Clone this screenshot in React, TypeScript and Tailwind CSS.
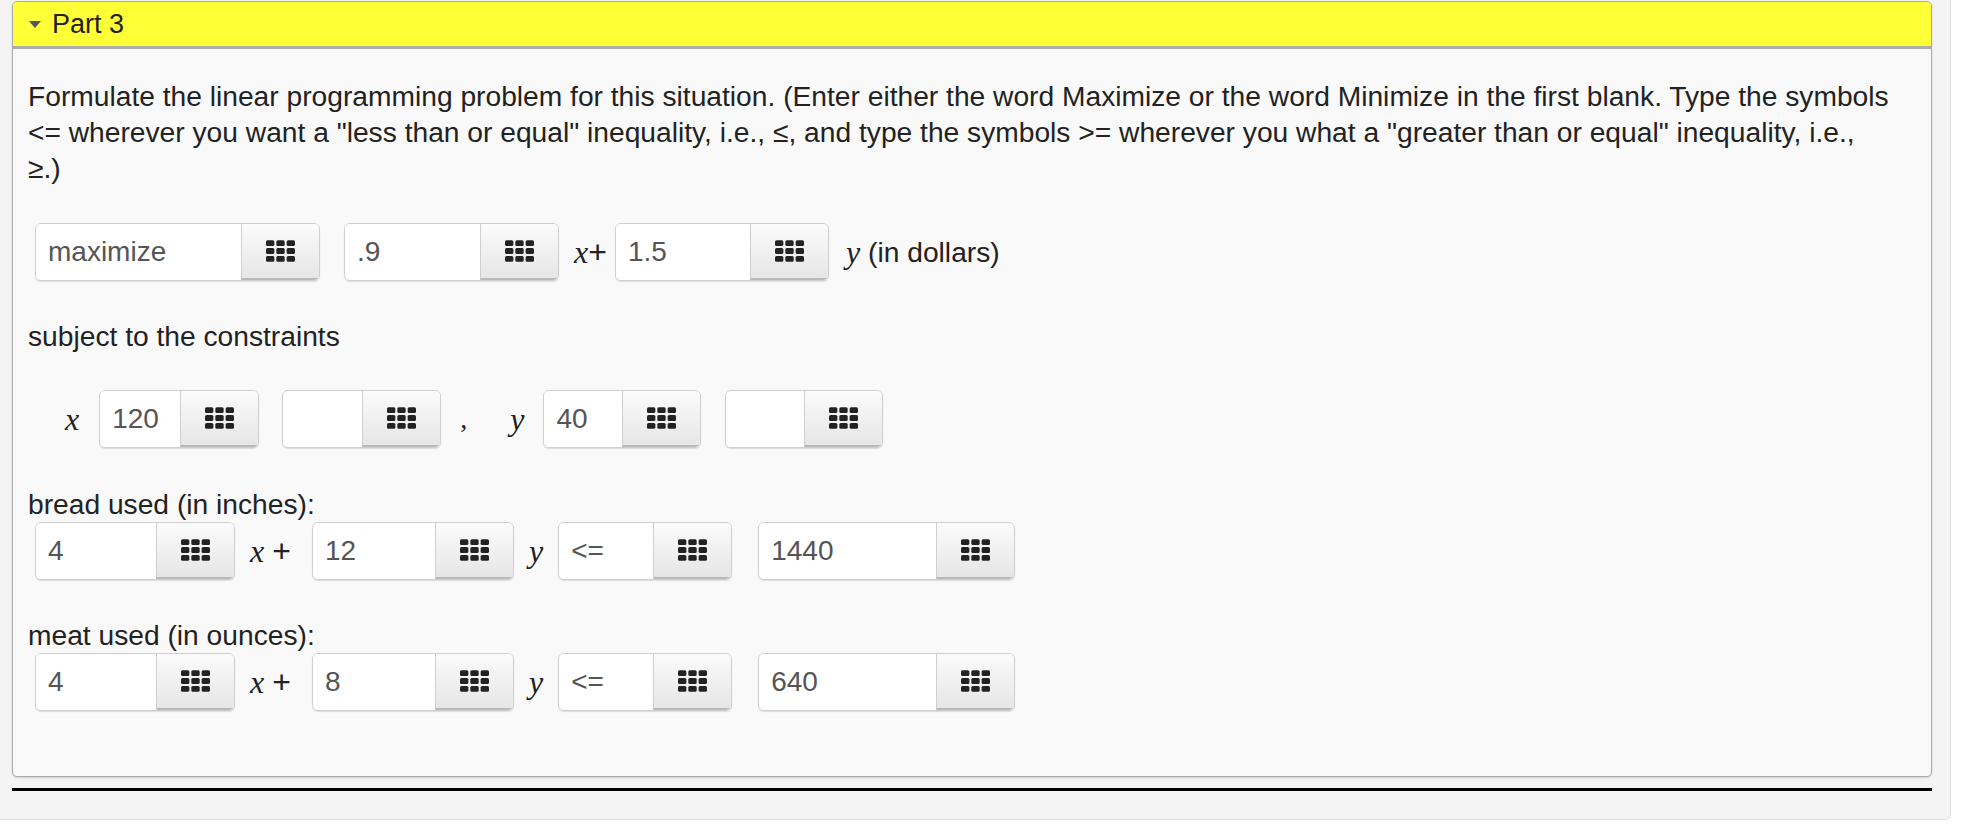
import type { ReactNode } from "react";

const SANS = "font-['Liberation_Sans',Arial,Helvetica,sans-serif]";

function GridIcon(): ReactNode {
	const cols = [0, 10.5, 21];
	const rows = [0, 8, 16];
	return (
		<svg width="29" height="22" viewBox="0 0 29.5 22" className="flex-none">
			{rows.map((y) =>
				cols.map((x) => (
					<rect key={`${x}-${y}`} x={x} y={y} width="8.5" height="6" rx="1.6" fill="#222" />
				))
			)}
		</svg>
	);
}

function Field({ value, w }: { value: string; w: string }): ReactNode {
	return (
		<div className="flex h-[58px] flex-none rounded-[6px] border border-[#cfcfcf] shadow-[0_1px_1px_rgba(0,0,0,0.12)] overflow-hidden">
			<div className={`${w} flex items-center bg-white pl-[12px] text-[28px] text-[#555]`}>{value}</div>
			<div className="w-[78px] flex items-center justify-center border-l border-[#cfcfcf] bg-gradient-to-b from-[#fbfbfb] to-[#e6e6e6] border-b-2 border-b-[#b9b9b9]">
				<GridIcon />
			</div>
		</div>
	);
}

function V({ children, className = "" }: { children: ReactNode; className?: string }): ReactNode {
	return (
		<span className={`font-['Liberation_Serif','Times_New_Roman',serif] italic text-[32px] leading-none text-[#222] ${className}`}>
			{children}
		</span>
	);
}

export default function App(): ReactNode {
	return (
		<div className={`min-h-screen bg-white ${SANS}`}>
			<div className="w-[1951px] h-[820px] bg-[#f4f4f4] border-r border-b border-[#e2e2e2] rounded-br-[6px] pt-px">
				<div className="ml-[12px] w-[1920px] rounded-[5px] border border-[#aaa] bg-[#f9f9f9] shadow-[0_1px_2px_rgba(0,0,0,0.15)] overflow-hidden">
					<div className="h-[47px] bg-[#ffff38] border-b-[3px] border-[#adadad] flex items-center pl-[16px]">
						<svg width="12" height="8" viewBox="0 0 12 8" className="mr-[11px] mt-[1px]">
							<polygon points="0,0 12,0 6,7" fill="#555" />
						</svg>
						<span className="text-[27px] text-[#222] leading-none">Part 3</span>
					</div>

					<div className="pl-[15px] pr-[20px] pt-[29px] pb-[65px] text-[28.2px] leading-[36px] text-[#222]">
						<p>
							Formulate the linear programming problem for this situation. (Enter either the word Maximize or the word
							Minimize in the first blank. Type the symbols &lt;= wherever you want a "less than or equal" inequality,
							i.e., ≤, and type the symbols &gt;= wherever you what a "greater than or equal" inequality, i.e.,
							<br />
							≥.)
						</p>

						<div className="flex items-center mt-[37px] ml-[7px]">
							<Field value="maximize" w="w-[205px]" />
							<div className="w-[24px]" />
							<Field value=".9" w="w-[135px]" />
							<V className="ml-[15px] mr-[8px]">
								x<span className={`not-italic ${SANS}`}>+</span>
							</V>
							<Field value="1.5" w="w-[134px]" />
							<V className="ml-[17px] mr-[8px]">y</V>
							<span>(in dollars)</span>
						</div>

						<p className="mt-[37px]">subject to the constraints</p>

						<div className="flex items-center mt-[36px]">
							<V className="ml-[37px] mr-[20px]">x</V>
							<Field value="120" w="w-[80px]" />
							<div className="w-[23px]" />
							<Field value="" w="w-[79px]" />
							<span className="ml-[19px] mr-[43px] font-['Liberation_Serif',serif] text-[28px]">,</span>
							<V className="mr-[19px]">y</V>
							<Field value="40" w="w-[78px]" />
							<div className="w-[24px]" />
							<Field value="" w="w-[78px]" />
						</div>

						<p className="mt-[38px]">bread used (in inches):</p>
						<div className="flex items-center ml-[7px]">
							<Field value="4" w="w-[120px]" />
							<V className="ml-[15px] w-[49px]">
								x <span className={`not-italic ${SANS}`}>+</span>
							</V>
							<div className="w-[13px]" />
							<Field value="12" w="w-[122px]" />
							<V className="ml-[15px] mr-[15px]">y</V>
							<Field value="<=" w="w-[94px]" />
							<div className="w-[26px]" />
							<Field value="1440" w="w-[177px]" />
						</div>

						<p className="mt-[37px]">meat used (in ounces):</p>
						<div className="flex items-center ml-[7px]">
							<Field value="4" w="w-[120px]" />
							<V className="ml-[15px] w-[49px]">
								x <span className={`not-italic ${SANS}`}>+</span>
							</V>
							<div className="w-[13px]" />
							<Field value="8" w="w-[122px]" />
							<V className="ml-[15px] mr-[15px]">y</V>
							<Field value="<=" w="w-[94px]" />
							<div className="w-[26px]" />
							<Field value="640" w="w-[177px]" />
						</div>
					</div>
				</div>
				<div className="ml-[12px] mt-[11px] w-[1920px] h-[3px] bg-black" />
			</div>
		</div>
	);
}
